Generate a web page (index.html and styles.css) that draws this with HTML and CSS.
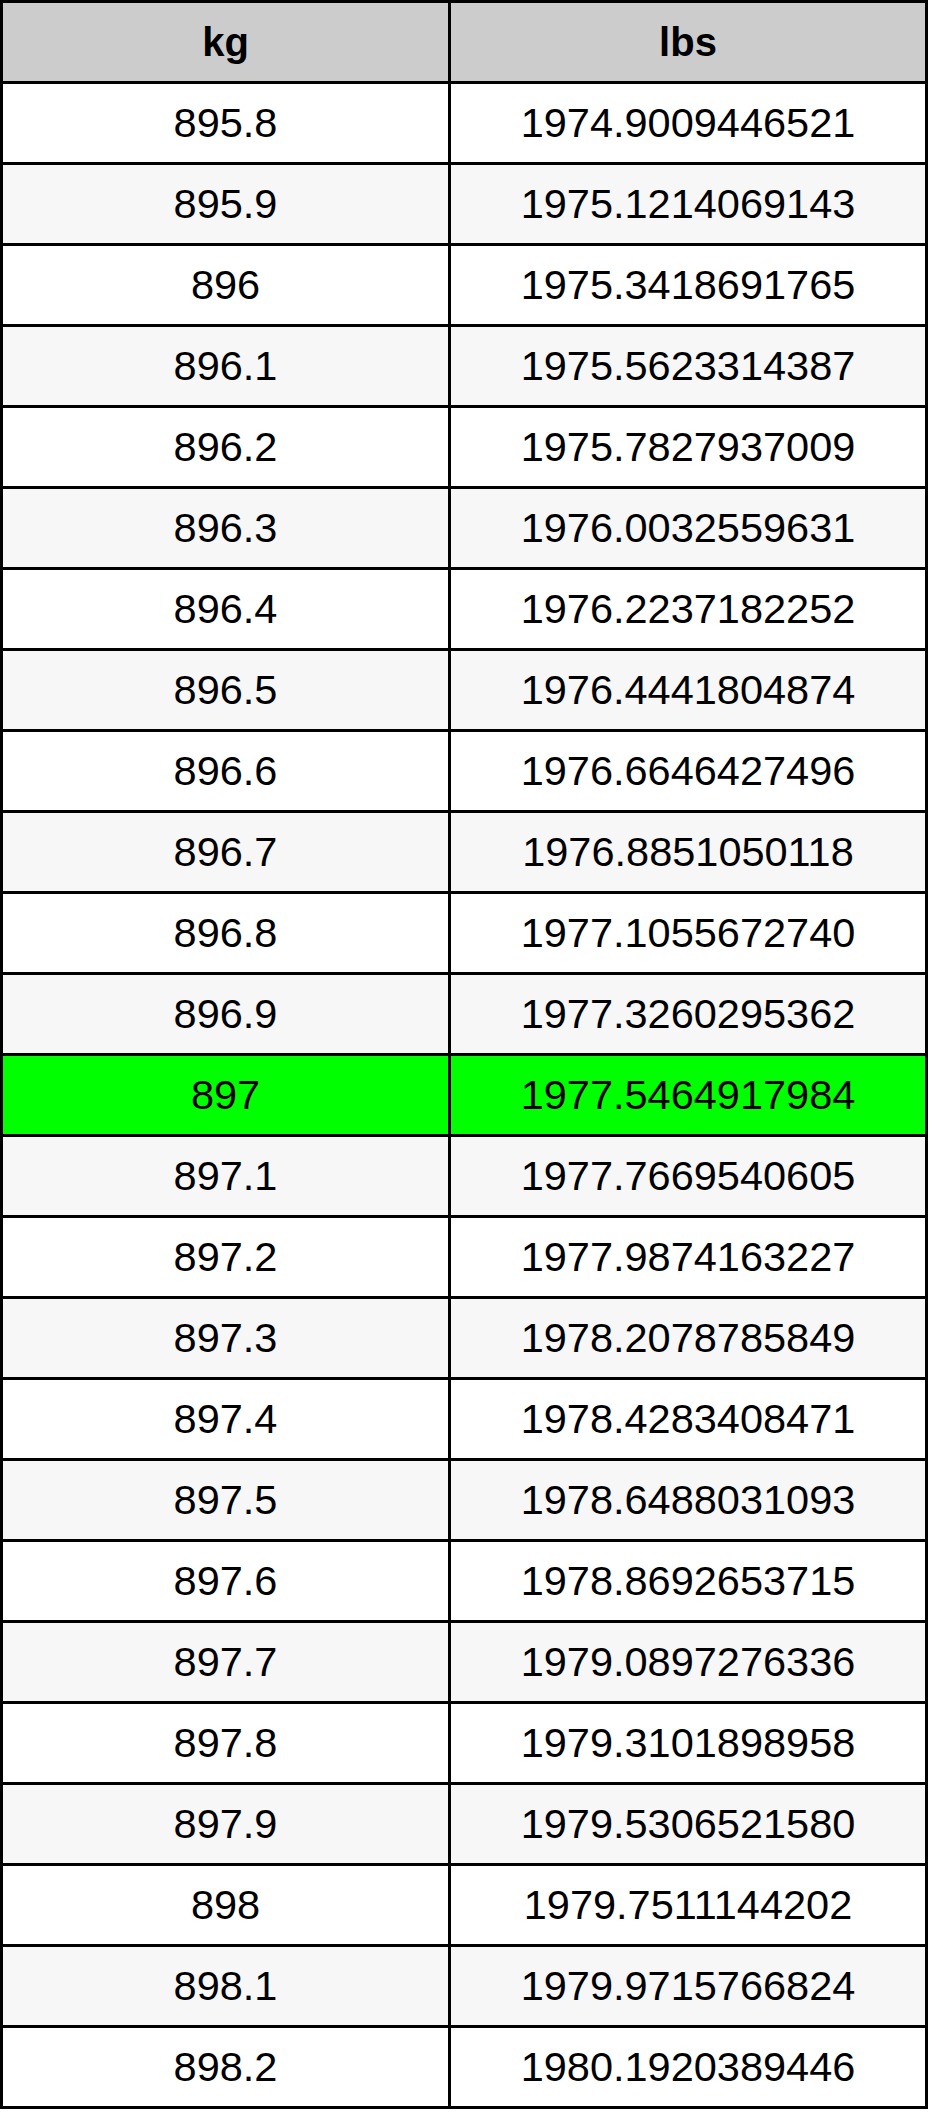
FILE: index.html
```html
<!DOCTYPE html>
<html>
<head>
<meta charset="utf-8">
<link rel="stylesheet" href="styles.css">
</head>
<body>
<table class="conv">
<thead>
<tr><th class="c1">kg</th><th class="c2">lbs</th></tr>
</thead>
<tbody>
<tr><td>895.8</td><td>1974.9009446521</td></tr>
<tr><td>895.9</td><td>1975.1214069143</td></tr>
<tr><td>896</td><td>1975.3418691765</td></tr>
<tr><td>896.1</td><td>1975.5623314387</td></tr>
<tr><td>896.2</td><td>1975.7827937009</td></tr>
<tr><td>896.3</td><td>1976.0032559631</td></tr>
<tr><td>896.4</td><td>1976.2237182252</td></tr>
<tr><td>896.5</td><td>1976.4441804874</td></tr>
<tr><td>896.6</td><td>1976.6646427496</td></tr>
<tr><td>896.7</td><td>1976.8851050118</td></tr>
<tr><td>896.8</td><td>1977.1055672740</td></tr>
<tr><td>896.9</td><td>1977.3260295362</td></tr>
<tr class="hl"><td>897</td><td>1977.5464917984</td></tr>
<tr><td>897.1</td><td>1977.7669540605</td></tr>
<tr><td>897.2</td><td>1977.9874163227</td></tr>
<tr><td>897.3</td><td>1978.2078785849</td></tr>
<tr><td>897.4</td><td>1978.4283408471</td></tr>
<tr><td>897.5</td><td>1978.6488031093</td></tr>
<tr><td>897.6</td><td>1978.8692653715</td></tr>
<tr><td>897.7</td><td>1979.0897276336</td></tr>
<tr><td>897.8</td><td>1979.3101898958</td></tr>
<tr><td>897.9</td><td>1979.5306521580</td></tr>
<tr><td>898</td><td>1979.7511144202</td></tr>
<tr><td>898.1</td><td>1979.9715766824</td></tr>
<tr><td>898.2</td><td>1980.1920389446</td></tr>
</tbody>
</table>
</body>
</html>
```
FILE: styles.css
```css
html, body {
  margin: 0;
  padding: 0;
  background: #ffffff;
}
.conv {
  border-collapse: separate;
  border-spacing: 0;
  border-left: 3px solid #000;
  border-top: 3px solid #000;
  font-family: "Liberation Sans", Arial, sans-serif;
  font-size: 41.5px;
  color: #000;
  table-layout: fixed;
  width: 928px;
}
.conv th, .conv td {
  border-right: 3px solid #000;
  border-bottom: 3px solid #000;
  height: 78px;
  padding: 0;
  text-align: center;
  vertical-align: middle;
  line-height: 1;
}
.conv th {
  background: #cccccc;
  font-weight: bold;
  font-size: 40px;
}
.conv .c1 { width: 445px; }
.conv .c2 { width: 474px; }
.conv tbody tr:nth-child(odd) td { background: #ffffff; }
.conv tbody tr:nth-child(even) td { background: #f7f7f7; }
.conv tbody tr.hl td { background: #00ff00; }
```
